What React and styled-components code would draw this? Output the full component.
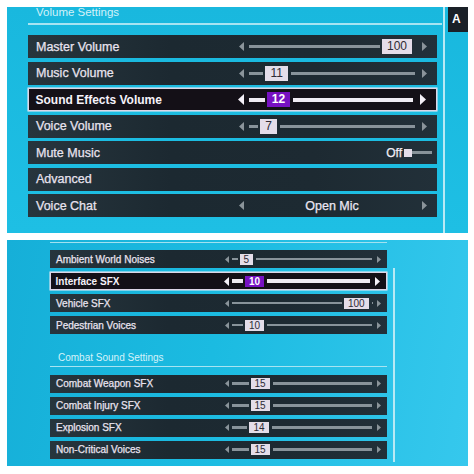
import styled, { createGlobalStyle } from "styled-components"

const GlobalStyle = createGlobalStyle`
  html, body {
    margin: 0;
    background: #ffffff;
  }
  body {
    font-family: "Liberation Sans", Arial, sans-serif;
  }
`

// sizes for the two menu scales
const SIZES = {
  lg: {
    rowH: 23,
    label: 12.5,
    labelActive: 12,
    pad: 8,
    control: 188,
    controlRight: 10,
    arrowW: 5,
    arrowH: 9,
    arrowGap: 5,
    line: 3,
    box: 15,
    boxPad: 5,
    boxFont: 12,
    step: 1.31,
  },
  sm: {
    rowH: 18,
    label: 10,
    labelActive: 10,
    pad: 6,
    control: 156,
    controlRight: 6,
    arrowW: 4,
    arrowH: 7,
    arrowGap: 3,
    line: 2.5,
    box: 11,
    boxPad: 4,
    boxFont: 10,
    step: 1.1,
  },
}

const Collage = styled.div`
  width: 474px;
  height: 474px;
  box-sizing: border-box;
  padding: 7px 6px 8px 7px;
  display: flex;
  flex-direction: column;
  gap: 7px;
  overflow: hidden;
`

const Shot = styled.section`
  display: flex;
  height: 226px;
  padding-left: ${(p) => p.$inset}px;
  overflow: hidden;
  background: ${(p) =>
    p.$variant === "bottom"
      ? "linear-gradient(100deg, #16afd8 0%, #1bbbe1 45%, #36c8ed 100%)"
      : "linear-gradient(180deg, #19b8de 0%, #1ebfe4 100%)"};
`

const Menu = styled.div`
  width: ${(p) => p.$width}px;
  flex: none;
  display: flex;
  flex-direction: column;
`

const Heading = styled.div`
  width: 406px;
  height: 16px;
  box-sizing: content-box;
  padding-left: 8px;
  border-bottom: 2px solid #a7e4f2;
  font-size: 11.5px;
  line-height: 10px;
  color: #d2f1f9;
  margin-bottom: 10px;
`

const TopRule = styled.div`
  height: 1.5px;
  margin-top: 1.5px;
  margin-bottom: 7px;
  background: #a2e1f0;
`

const SectionHeading = styled.div`
  height: 14px;
  margin-top: 18px;
  margin-bottom: 7.5px;
  padding-left: 8px;
  border-bottom: 1.5px solid #a7e4f2;
  font-size: 10px;
  line-height: 12px;
  color: #d4f3fa;
`

const List = styled.div`
  display: flex;
  flex-direction: column;
  gap: ${(p) => p.$gap}px;
`

const Row = styled.div`
  height: ${(p) => SIZES[p.$size].rowH}px;
  box-sizing: border-box;
  display: flex;
  align-items: center;
  background: ${(p) =>
    p.$active
      ? "#141017"
      : "linear-gradient(90deg, #27353d 0%, #1c2931 35%, #1d2a32 70%, #223039 100%)"};
  border: ${(p) => (p.$active ? "1.5px solid #ddd5e6" : "none")};
  box-shadow: ${(p) => (p.$active ? "0 0 0 0.5px #f2eef6" : "none")};
`

const Label = styled.span`
  flex: 1;
  padding-left: ${(p) => SIZES[p.$size].pad - (p.$active ? 1.5 : 0)}px;
  font-size: ${(p) => (p.$active ? SIZES[p.$size].labelActive : SIZES[p.$size].label)}px;
  font-weight: ${(p) => (p.$active ? 700 : 400)};
  color: ${(p) => (p.$active ? "#f6f2fa" : "#e9e3ef")};
  -webkit-text-stroke: ${(p) => (p.$active ? "0" : "0.25px")} currentColor;
  white-space: nowrap;
`

const Control = styled.div`
  width: ${(p) => SIZES[p.$size].control}px;
  margin-right: ${(p) => SIZES[p.$size].controlRight}px;
  flex: none;
  display: flex;
  align-items: center;
`

const Line = styled.div`
  height: ${(p) => (p.$active ? SIZES[p.$size].line + 1 : SIZES[p.$size].line)}px;
  background: ${(p) => (p.$active ? "#efebf2" : "#88939a")};
  flex: ${(p) => (p.$grow ? "1 1 0" : "none")};
`

const ValueBox = styled.span`
  flex: none;
  height: ${(p) => SIZES[p.$size].box}px;
  line-height: ${(p) => SIZES[p.$size].box}px;
  padding: 0 ${(p) => SIZES[p.$size].boxPad}px;
  margin: 0 3px 0 2px;
  font-size: ${(p) => SIZES[p.$size].boxFont}px;
  font-weight: ${(p) => (p.$active ? 700 : 400)};
  color: ${(p) => (p.$active ? "#ffffff" : "#2e2b35")};
  background: ${(p) => (p.$active ? "#7711c2" : "#e4dde9")};
`

const ArrowSvg = styled.svg`
  flex: none;
  display: block;
  margin: ${(p) =>
    p.$dir === "left"
      ? `0 ${SIZES[p.$size].arrowGap}px 0 0`
      : `0 0 0 ${SIZES[p.$size].arrowGap + 2}px`};
`

const Toggle = styled.div`
  margin-left: auto;
  margin-right: 5px;
  display: flex;
  align-items: center;
`

const ToggleText = styled.span`
  font-size: 12px;
  color: #f1edf5;
  margin-right: 2px;
  -webkit-text-stroke: 0.25px currentColor;
`

const ToggleKnob = styled.span`
  width: 8px;
  height: 8px;
  background: #e4dde9;
`

const ToggleBar = styled.span`
  width: 20px;
  height: 3px;
  background: #88939a;
`

const ChoiceText = styled.span`
  flex: 1;
  text-align: center;
  font-size: 12.5px;
  color: #ece6f2;
  -webkit-text-stroke: 0.25px currentColor;
`

const Divider = styled.div`
  width: 2px;
  flex: none;
  margin: ${(p) => p.$margin};
  background: #b9e9f4;
`

const Side = styled.div`
  flex: 1;
  margin-left: 3px;
`

const Tab = styled.div`
  height: 25px;
  padding-left: 4px;
  background: #1a2027;
  color: #ffffff;
  font-size: 12px;
  font-weight: 700;
  line-height: 25px;
`

function Arrow({ dir, size, active }) {
  const s = SIZES[size]
  const w = active ? s.arrowW + 1 : s.arrowW
  const h = active ? s.arrowH + 2 : s.arrowH
  const points = dir === "left" ? `${w},0 ${w},${h} 0,${h / 2}` : `0,0 0,${h} ${w},${h / 2}`
  return (
    <ArrowSvg $dir={dir} $size={size} width={w} height={h} viewBox={`0 0 ${w} ${h}`}>
      <polygon points={points} fill={active ? "#f4f0f7" : "#8a949a"} />
    </ArrowSvg>
  )
}

function Slider({ value, size, active }) {
  return (
    <Control $size={size}>
      <Arrow dir="left" size={size} active={active} />
      <Line $size={size} $active={active} style={{ width: value * SIZES[size].step }} />
      <ValueBox $size={size} $active={active}>
        {value}
      </ValueBox>
      <Line $size={size} $active={active} $grow />
      <Arrow dir="right" size={size} active={active} />
    </Control>
  )
}

function SettingRow({ item, size }) {
  return (
    <Row $size={size} $active={item.active}>
      <Label $size={size} $active={item.active}>
        {item.label}
      </Label>
      {item.type === "slider" && <Slider value={item.value} size={size} active={item.active} />}
      {item.type === "toggle" && (
        <Toggle>
          <ToggleText>{item.value}</ToggleText>
          <ToggleKnob />
          <ToggleBar />
        </Toggle>
      )}
      {item.type === "choice" && (
        <Control $size={size}>
          <Arrow dir="left" size={size} />
          <ChoiceText>{item.value}</ChoiceText>
          <Arrow dir="right" size={size} />
        </Control>
      )}
    </Row>
  )
}

const volumeSettings = [
  { label: "Master Volume", type: "slider", value: 100 },
  { label: "Music Volume", type: "slider", value: 11 },
  { label: "Sound Effects Volume", type: "slider", value: 12, active: true },
  { label: "Voice Volume", type: "slider", value: 7 },
  { label: "Mute Music", type: "toggle", value: "Off" },
  { label: "Advanced", type: "none" },
  { label: "Voice Chat", type: "choice", value: "Open Mic" },
]

const worldSettings = [
  { label: "Ambient World Noises", type: "slider", value: 5 },
  { label: "Interface SFX", type: "slider", value: 10, active: true },
  { label: "Vehicle SFX", type: "slider", value: 100 },
  { label: "Pedestrian Voices", type: "slider", value: 10 },
]

const combatSettings = [
  { label: "Combat Weapon SFX", type: "slider", value: 15 },
  { label: "Combat Injury SFX", type: "slider", value: 15 },
  { label: "Explosion SFX", type: "slider", value: 14 },
  { label: "Non-Critical Voices", type: "slider", value: 15 },
]

export default function App() {
  return (
    <>
      <GlobalStyle />
      <Collage>
        <Shot $inset={21}>
          <Menu $width={409}>
            <Heading>Volume Settings</Heading>
            <List $gap={3.5}>
              {volumeSettings.map((item) => (
                <SettingRow key={item.label} item={item} size="lg" />
              ))}
            </List>
          </Menu>
          <Divider $margin="0 0 0 6px" />
          <Side>
            <Tab>A</Tab>
          </Side>
        </Shot>

        <Shot $inset={43} $variant="bottom">
          <Menu $width={337}>
            <TopRule />
            <List $gap={4}>
              {worldSettings.map((item) => (
                <SettingRow key={item.label} item={item} size="sm" />
              ))}
            </List>
            <SectionHeading>Combat Sound Settings</SectionHeading>
            <List $gap={4}>
              {combatSettings.map((item) => (
                <SettingRow key={item.label} item={item} size="sm" />
              ))}
            </List>
          </Menu>
          <Divider $margin="28px 0 4px 6px" />
        </Shot>
      </Collage>
    </>
  )
}
